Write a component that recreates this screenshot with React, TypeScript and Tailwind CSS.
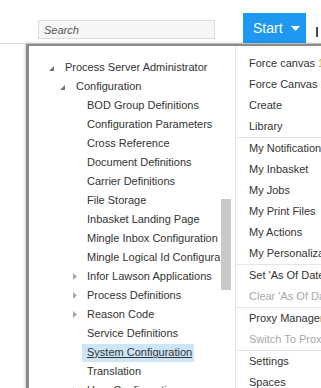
type TreeNode = {
  label: string
  level: 0 | 1 | 2
  arrow?: 'open' | 'closed'
  selected?: boolean
}

const TREE: TreeNode[] = [
  { label: 'Process Server Administrator', level: 0, arrow: 'open' },
  { label: 'Configuration', level: 1, arrow: 'open' },
  { label: 'BOD Group Definitions', level: 2 },
  { label: 'Configuration Parameters', level: 2 },
  { label: 'Cross Reference', level: 2 },
  { label: 'Document Definitions', level: 2 },
  { label: 'Carrier Definitions', level: 2 },
  { label: 'File Storage', level: 2 },
  { label: 'Inbasket Landing Page', level: 2 },
  { label: 'Mingle Inbox Configuration', level: 2 },
  { label: 'Mingle Logical Id Configuration', level: 2 },
  { label: 'Infor Lawson Applications', level: 2, arrow: 'closed' },
  { label: 'Process Definitions', level: 2, arrow: 'closed' },
  { label: 'Reason Code', level: 2, arrow: 'closed' },
  { label: 'Service Definitions', level: 2 },
  { label: 'System Configuration', level: 2, selected: true },
  { label: 'Translation', level: 2 },
  { label: 'User Configuration', level: 2, arrow: 'closed' },
]

const LEVEL_PAD = ['pl-[20px]', 'pl-[31px]', 'pl-[42px]']

type MenuEntry = { label: string; extra?: string; disabled?: boolean } | 'divider'

const MENU: MenuEntry[] = [
  { label: 'Force canvas', extra: '1.0' },
  { label: 'Force Canvas', extra: '2.0' },
  { label: 'Create' },
  { label: 'Library' },
  'divider',
  { label: 'My Notifications' },
  { label: 'My Inbasket' },
  { label: 'My Jobs' },
  { label: 'My Print Files' },
  { label: 'My Actions' },
  { label: 'My Personalizations' },
  'divider',
  { label: "Set 'As Of Date'" },
  { label: "Clear 'As Of Date'", disabled: true },
  'divider',
  { label: 'Proxy Management' },
  { label: 'Switch To Proxy', disabled: true },
  'divider',
  { label: 'Settings' },
  { label: 'Spaces' },
]

function TreeArrow({ kind }: { kind?: 'open' | 'closed' }) {
  return (
    <span className="w-[16px] h-[19px] shrink-0 flex items-center">
      {kind === 'open' && (
        <svg width="5" height="5" viewBox="0 0 5 5" className="mt-[2px]">
          <polygon points="5,0 5,5 0,5" fill="#737373" />
        </svg>
      )}
      {kind === 'closed' && (
        <svg width="5" height="7" viewBox="0 0 5 7" className="ml-[2px]">
          <polygon points="0,0 4,3.5 0,7" fill="#a8a8a8" />
        </svg>
      )}
    </span>
  )
}

export default function App() {
  return (
    <div className="relative w-[321px] h-[388px] overflow-hidden bg-white font-['Liberation_Sans',Arial,sans-serif] text-[#333]">
      {/* page header */}
      <div className="h-[44px] border-b border-[#dedede] flex items-start">
        <input
          placeholder="Search"
          className="ml-[38px] mt-[20px] w-[177px] h-[19px] border border-[#dcdcdc] bg-[#f6f6f6] pl-[5px] text-[11px] italic outline-none placeholder:text-[#555] placeholder:italic"
        />
        <button className="ml-[28px] mt-[13px] w-[63px] h-[30px] bg-[#1e98f0] text-white text-[14px] flex items-center pl-[10px]">
          <span>Start</span>
          <svg width="9" height="5" viewBox="0 0 9 5" className="ml-[8px] mt-[1px]">
            <polygon points="0,0 9,0 4.5,5" fill="#fff" />
          </svg>
        </button>
        <div className="ml-[10px] mt-[27px] w-[2px] h-[10px] bg-[#4a4a4a]" />
      </div>

      {/* dropdown panel */}
      <div className="absolute top-[44px] left-[26px] right-[-60px] bottom-[-40px] bg-white border-l-[3px] border-t-[2px] border-[#8a8a8a] shadow-[0_0_3px_rgba(0,0,0,0.35)] flex text-[11px]">
        <div className="w-[206px] shrink-0 flex">
          <div className="w-[191px] overflow-hidden pt-[12px]">
            {TREE.map((n) => (
              <div
                key={n.label}
                className={`h-[19px] flex items-center whitespace-nowrap ${LEVEL_PAD[n.level]}`}
              >
                <TreeArrow kind={n.arrow} />
                {n.selected ? (
                  <span className="-ml-[5px] pl-[5px] pr-[2px] h-[18px] flex items-center bg-[#cce6f8] underline">
                    {n.label}
                  </span>
                ) : (
                  <span>{n.label}</span>
                )}
              </div>
            ))}
          </div>
          <div className="w-[15px] shrink-0">
            <div className="mt-[153px] ml-[1px] w-[10px] h-[91px] bg-[#c9c9c9]" />
          </div>
        </div>

        <div className="flex-1 border-l border-[#e6e6e6] pt-[7px]">
          {MENU.map((m, i) =>
            m === 'divider' ? (
              <div key={i} className="h-px bg-[#e5e5e5]" />
            ) : (
              <div
                key={i}
                className={`h-[21px] pl-[13px] flex items-center whitespace-nowrap ${m.disabled ? 'text-[#a8a8a8]' : 'text-[#333]'}`}
              >
                <span>{m.label}</span>
                {m.extra && <span className="ml-[3px] text-[#f0a43a]">{m.extra}</span>}
              </div>
            )
          )}
        </div>
      </div>
    </div>
  )
}
